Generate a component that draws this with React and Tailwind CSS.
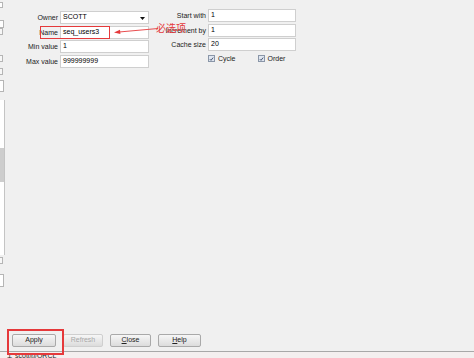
import React from 'react';

const font = { fontFamily: '"Liberation Sans", Arial, sans-serif' };

const Field = ({ value, w = 'w-[89px]', children }) => (
    <div className={`h-[13px] ${w} bg-white border border-[#cfcfcf] flex items-center pl-[2px] text-[7px] text-black relative`}>
        {value}
        {children}
    </div>
);

const Label = ({ children, w }) => (
    <div className={`${w} text-right pr-[2px] text-[7px] text-[#222] leading-[13px] whitespace-nowrap`}>{children}</div>
);

const Check = ({ label }) => (
    <div className="flex items-center gap-[3px] text-[7px] text-[#222]">
        <div className="w-[7px] h-[7px] border border-[#8a96a8] bg-[#dfe6f0] flex items-center justify-center">
            <svg width="6" height="6" viewBox="0 0 6 6"><path d="M1 3.2 L2.4 4.6 L5 1.3" stroke="#2a3a5a" strokeWidth="1" fill="none" /></svg>
        </div>
        {label}
    </div>
);

const Btn = ({ children, disabled, w }) => (
    <div className={`${w} h-[13px] rounded-[2px] border ${disabled ? 'border-[#cfcfcf] text-[#a8a8a8]' : 'border-[#a9a9a9] text-[#222]'} bg-gradient-to-b from-[#f6f6f6] to-[#dcdcdc] flex items-center justify-center text-[7px]`}>
        {children}
    </div>
);

const LeftStrip = () => (
    <div className="w-[6px] flex flex-col shrink-0">
        <div className="mt-[2px] w-[3px] h-[6px] border border-l-0 border-[#b5b5b5] bg-white" />
        <div className="mt-[12px] w-[4px] h-[8px] border border-l-0 border-[#b5b5b5] bg-white" />
        <div className="w-[3px] h-[7px] border border-l-0 border-[#b5b5b5] bg-[#f7f7f7]" />
        <div className="mt-[20px] w-[3px] h-[7px] border border-l-0 border-[#b5b5b5] bg-[#f7f7f7]" />
        <div className="mt-[6px] w-[3px] h-[7px] border border-l-0 border-[#b5b5b5] bg-[#f7f7f7]" />
        <div className="mt-[5px] w-[4px] h-[12px] border border-l-0 border-[#b5b5b5] bg-white" />
        <div className="mt-[8px] w-[5px] h-[155px] border-r border-[#c4c4c4] bg-white flex flex-col">
            <div className="mt-[48px] h-[34px] w-[4px] bg-[#cdcdcd]" />
        </div>
        <div className="mt-[2px] w-[3px] h-[7px] border border-l-0 border-[#b5b5b5] bg-[#f7f7f7]" />
        <div className="mt-[10px] w-[4px] h-[13px] border border-l-0 border-[#b5b5b5] bg-white" />
    </div>
);

export default function App() {
    return (
        <div className="w-[474px] h-[358px] bg-[#f0f0f0] flex flex-col relative overflow-hidden" style={font}>
            <div className="flex flex-1">
                <LeftStrip />
                <div className="flex flex-col gap-[1.5px] mt-[11px]">
                    <div className="flex">
                        <Label w="w-[54px]">Owner</Label>
                        <Field value="SCOTT">
                            <svg className="absolute right-[3px] top-[4.5px]" width="5" height="3" viewBox="0 0 5 3"><path d="M0 0 H5 L2.5 3 Z" fill="#111" /></svg>
                        </Field>
                    </div>
                    <div className="flex relative">
                        <Label w="w-[54px]">Name</Label>
                        <Field value="seq_users3" />
                        <div className="absolute left-[34px] top-0 w-[70px] h-[13px] border-[1.5px] border-[#e5393b]" />
                    </div>
                    <div className="flex">
                        <Label w="w-[54px]">Min value</Label>
                        <Field value="1" />
                    </div>
                    <div className="flex">
                        <Label w="w-[54px]">Max value</Label>
                        <Field value="999999999" />
                    </div>
                </div>
                <div className="flex flex-col gap-[1.5px] mt-[9px] ml-[7px]">
                    <div className="flex">
                        <Label w="w-[52px]">Start with</Label>
                        <Field value="1" w="w-[88px]" />
                    </div>
                    <div className="flex">
                        <Label w="w-[52px]">Increment by</Label>
                        <Field value="1" w="w-[88px]" />
                    </div>
                    <div className="flex">
                        <Label w="w-[52px]">Cache size</Label>
                        <Field value="20" w="w-[88px]" />
                    </div>
                    <div className="flex gap-[22px] ml-[52px] mt-[1px]">
                        <Check label="Cycle" />
                        <Check label="Order" />
                    </div>
                </div>
            </div>

            <div className="flex gap-[7px] pl-[12px] pb-[4px] relative">
                <Btn w="w-[44px]">Apply</Btn>
                <Btn w="w-[40px]" disabled>Refresh</Btn>
                <Btn w="w-[41px]"><span><span className="underline">C</span>lose</span></Btn>
                <Btn w="w-[43px]"><span><span className="underline">H</span>elp</span></Btn>
                <div className="absolute left-[7px] top-[-5px] w-[57px] h-[26px] border-2 border-[#e5393b]" />
            </div>

            <div className="h-[7px] border-t border-[#a8a8a8] bg-[#f4efef] flex items-start pl-[7px] gap-[3px] text-[7px] text-[#222] leading-[8px]">
                <span className="text-[6px] font-bold">⊥</span>
                <span>scott@ORCL</span>
            </div>

            <svg className="absolute left-0 top-0 pointer-events-none" width="474" height="358">
                <path d="M158 28.5 L119 32" stroke="#e5393b" strokeWidth="0.9" fill="none" />
                <path d="M114 32.4 L120 29.8 L120.4 34 Z" fill="#e5393b" />
            </svg>
            <div className="absolute left-[156px] top-[22px] text-[10px] leading-[11px] text-[#e5393b]" style={{ fontFamily: '"Noto Sans CJK SC", sans-serif' }}>必选项</div>
        </div>
    );
}
